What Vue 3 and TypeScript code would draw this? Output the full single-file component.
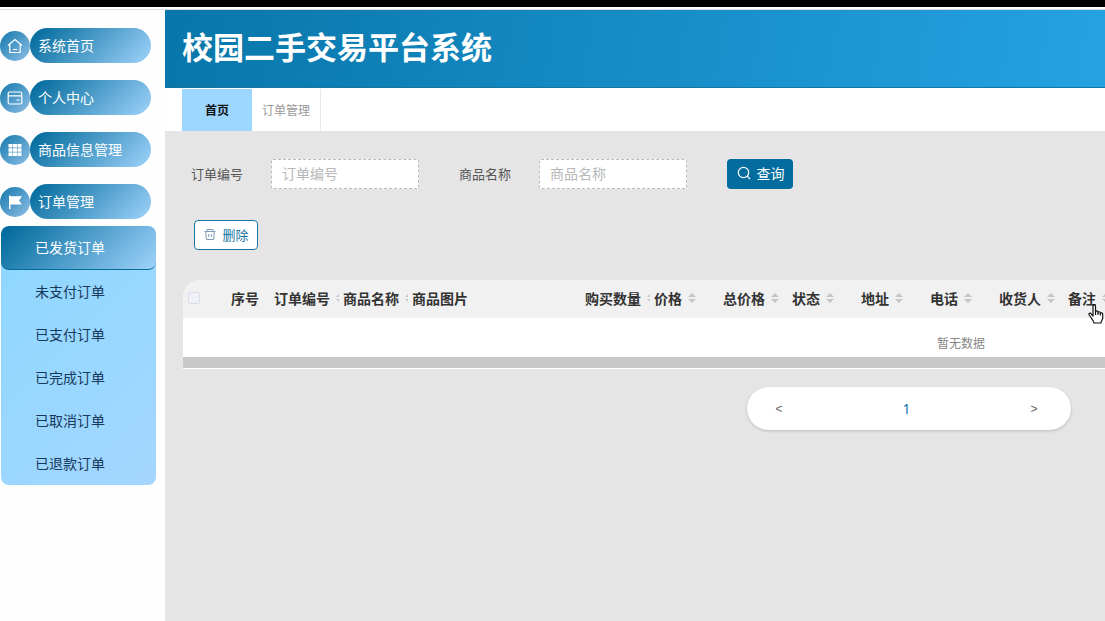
<script setup lang="ts">
import { ref } from 'vue'

interface MenuItem {
  icon: string
  label: string
}

interface Column {
  label: string
  sortable: boolean
}

const menu: MenuItem[] = [
  { icon: 'home', label: '系统首页' },
  { icon: 'card', label: '个人中心' },
  { icon: 'grid', label: '商品信息管理' },
  { icon: 'flag', label: '订单管理' },
]

const subMenu: string[] = ['已发货订单', '未支付订单', '已支付订单', '已完成订单', '已取消订单', '已退款订单']
const activeSub = ref('已发货订单')

const columns: Column[] = [
  { label: '订单编号', sortable: true },
  { label: '商品名称', sortable: true },
  { label: '商品图片', sortable: false },
  { label: '购买数量', sortable: true },
  { label: '价格', sortable: true },
  { label: '总价格', sortable: true },
  { label: '状态', sortable: true },
  { label: '地址', sortable: true },
  { label: '电话', sortable: true },
  { label: '收货人', sortable: true },
  { label: '备注', sortable: true },
]

const orderNo = ref('')
const productName = ref('')
</script>

<template>
  <div class="app">
    <div class="topbar"></div>
    <div class="shell">
      <aside class="sidebar">
        <nav>
          <a v-for="item in menu" :key="item.label" href="#" class="menu-item">
            <span class="menu-icon">
              <svg v-if="item.icon === 'home'" viewBox="0 0 16 16" fill="none" stroke="#fff" stroke-width="1.2">
                <path d="M1 7.500 8 1.500l7 6M2.800 6.200v8.300h10.400V6.200M6 11.500h4" />
              </svg>
              <svg v-else-if="item.icon === 'card'" viewBox="0 0 16 16" fill="none" stroke="#fff" stroke-width="1.2">
                <rect x="1.200" y="2" width="13.600" height="12" rx="1.500" />
                <path d="M1.200 5.800h13.600M9.500 10h3" />
              </svg>
              <svg v-else-if="item.icon === 'grid'" viewBox="0 0 16 16" fill="#fff">
                <path d="M1.500 2h4v3.600h-4zM6 2h4v3.600H6zM10.500 2h4v3.600h-4zM1.500 6.200h4v3.600h-4zM6 6.200h4v3.600H6zM10.500 6.200h4v3.600h-4zM1.500 10.400h4V14h-4zM6 10.400h4V14H6zM10.500 10.400h4V14h-4z" />
              </svg>
              <svg v-else viewBox="0 0 16 16" fill="#fff">
                <path d="M2 1.500h1.500v13.500H2zM3.500 2.300h11.500l-3 4.100 3 4.100H3.500z" />
              </svg>
            </span>
            <span class="menu-label">{{ item.label }}</span>
          </a>
          <div class="submenu">
            <a
              v-for="name in subMenu"
              :key="name"
              href="#"
              class="sub-item"
              :class="{ active: name === activeSub }"
              @click.prevent="activeSub = name"
            >{{ name }}</a>
          </div>
        </nav>
      </aside>

      <main class="main">
        <header class="banner"><h1>校园二手交易平台系统</h1></header>
        <div class="tabs">
          <button type="button" class="tab current">首页</button>
          <button type="button" class="tab">订单管理</button>
        </div>

        <form class="filters" @submit.prevent>
          <label for="order-no">订单编号</label>
          <input id="order-no" v-model="orderNo" type="text" placeholder="订单编号" />
          <label for="product-name">商品名称</label>
          <input id="product-name" v-model="productName" type="text" placeholder="商品名称" />
          <button type="submit" class="search">
            <svg viewBox="0 0 14 14" fill="none" stroke="#fff" stroke-width="1.2">
              <circle cx="6.500" cy="6.500" r="5.200" />
              <path d="m10.200 10.200 2.800 2.800" />
            </svg>
            查询
          </button>
        </form>

        <div class="actions">
          <button type="button" class="delete">
            <svg viewBox="0 0 12 12" fill="none" stroke="#7f9cb8" stroke-width="1">
              <path d="M.5 3.500h11M3 3.500V1.500h6v2M1.800 3.500l.5 8h7.400l.5-8M4.700 6v3M7.300 6v3" />
            </svg>
            删除
          </button>
        </div>

        <div class="table-wrap">
          <table>
            <colgroup>
              <col class="c-check" />
              <col class="c-index" />
              <col v-for="c in columns" :key="c.label" :class="c.sortable ? 'c-data' : 'c-image'" />
              <col />
            </colgroup>
            <thead>
              <tr>
                <th class="check"><input type="checkbox" aria-label="全选" /></th>
                <th class="index">序号</th>
                <th v-for="c in columns" :key="c.label">
                  <div class="cell">
                    {{ c.label }}
                    <span v-if="c.sortable" class="sort"><i class="up"></i><i class="down"></i></span>
                  </div>
                </th>
                <th></th>
              </tr>
            </thead>
            <tbody>
              <tr>
                <td :colspan="columns.length + 3">暂无数据</td>
              </tr>
            </tbody>
          </table>
          <div class="track"></div>
        </div>

        <div class="pager-row">
          <div class="pager">
            <button type="button">&lt;</button>
            <button type="button" class="page">1</button>
            <button type="button">&gt;</button>
          </div>
        </div>
      </main>
    </div>

    <svg class="pointer" viewBox="0 0 16 20" fill="#fff" stroke="#111" stroke-width="1.2" stroke-linejoin="round">
      <path d="M5 12V2.200C5 .5 7.500.5 7.500 2.200V8c0-1.500 2.500-1.500 2.500 0v.8c0-1.400 2.400-1.400 2.400 0v1c0-1.300 2.300-1.200 2.300.2V14c0 2-1.700 3-1.700 5H6c0-2-2-3.500-3-5.500L1.200 11c-1-1.500 1-2.400 2-1.200z" />
      <path d="M7.500 8v3M10 8.800V11M12.400 9.800V11.500" fill="none" />
    </svg>
  </div>
</template>

<style>
body {
  margin: 0;
  background: #fff;
  overflow: hidden;
}
</style>

<style scoped>
.app {
  display: flex;
  flex-direction: column;
  min-height: 100vh;
  position: relative;
  overflow: hidden;
  font-family: "Liberation Sans", "Noto Sans CJK SC", sans-serif;
  font-size: 14px;
  color: #333;
}
.app *,
.app {
  box-sizing: border-box;
}
button,
input {
  font-family: inherit;
  margin: 0;
}
a {
  text-decoration: none;
}
svg {
  flex: none;
}
.topbar {
  height: 10px;
  background: #fff;
  border-top: 7px solid #000;
  border-bottom: 1px solid #dcdcdc;
}
.shell {
  flex: 1;
  display: flex;
}
.sidebar {
  width: 165px;
  flex: none;
  padding-top: 18px;
  background: #fefefe;
}
.menu-item {
  display: flex;
  align-items: center;
  height: 35px;
  margin: 0 14px 17px 0;
}
.menu-icon {
  display: flex;
  align-items: center;
  justify-content: center;
  width: 30px;
  height: 30px;
  border-radius: 50%;
  background: linear-gradient(135deg, #1377aa, #8fc0e8);
}
.menu-icon svg {
  width: 16px;
  height: 16px;
}
.menu-label {
  flex: 1;
  height: 35px;
  padding-left: 8px;
  border-radius: 18px;
  background: linear-gradient(135deg, #046c9d 5%, #9fd3fb);
  color: #fff;
  line-height: 36px;
}
.submenu {
  margin: -10px 9px 0 1px;
  border-radius: 8px;
  overflow: hidden;
  background: linear-gradient(135deg, #8dd8ff, #a4d6ff);
}
.sub-item {
  display: block;
  height: 43px;
  padding-left: 34px;
  line-height: 44px;
  color: #17395c;
}
.sub-item.active {
  height: 44px;
  border-bottom: 1px solid #046c9d;
  border-radius: 8px;
  background: linear-gradient(135deg, #046c9d 5%, #9fd3fb);
  color: #fff;
}
.main {
  flex: 1;
  min-width: 0;
  background: #e5e5e5;
}
.banner {
  height: 78px;
  padding-left: 17px;
  background: linear-gradient(100deg, #0876a9, #25a2e2);
  border-bottom: 1px solid #1676a2;
}
h1 {
  margin: 0;
  font-size: 31px;
  line-height: 78px;
  color: #fff;
}
.tabs {
  display: flex;
  height: 43px;
  padding: 1px 0 0 17px;
  background: #fff;
}
.tab {
  padding: 0 10px 2px;
  border: 0;
  border-right: 1px solid #e8e8e8;
  background: transparent;
  font-size: 12px;
  color: #999;
}
.tab.current {
  width: 70px;
  border-right: 0;
  background: #9dd7ff;
  font-weight: 700;
  color: #111;
}
.filters {
  display: flex;
  align-items: center;
  padding: 28px 0 0 26px;
}
.filters label {
  width: 80px;
  padding-bottom: 2px;
  font-size: 13px;
  color: #555;
}
.filters input {
  width: 148px;
  height: 30px;
  margin-right: 40px;
  padding: 0 10px;
  border: 1px dashed #bbb;
  border-radius: 2px;
  background: #fff;
  font-size: 14px;
}
.filters input::placeholder {
  color: #b8b8b8;
}
.search,
.delete {
  display: flex;
  align-items: center;
  justify-content: center;
  gap: 6px;
  height: 30px;
  padding: 0 0 2px 1px;
  border-radius: 4px;
  font-size: 14px;
}
.search {
  width: 66px;
  border: 0;
  background: #036c9f;
  color: #fff;
}
.search svg {
  width: 14px;
  height: 14px;
}
.actions {
  padding: 31px 0 0 29px;
}
.delete {
  width: 64px;
  border: 1px solid #1a76a3;
  background: #fff;
  font-size: 13px;
  color: #1a76a3;
}
.delete svg {
  width: 12px;
  height: 12px;
}
.table-wrap {
  margin: 30px 0 0 18px;
  border-bottom: 1px solid #fff;
  border-radius: 16px 0 0 0;
  overflow: hidden;
}
table {
  width: 1556px;
  table-layout: fixed;
  border-collapse: collapse;
}
.c-check {
  width: 39px;
}
.c-index {
  width: 48px;
}
.c-data {
  width: 69px;
}
.c-image {
  width: 173px;
}
th {
  height: 38px;
  padding: 0 0 2px 4px;
  background: #f1f1f1;
  font-weight: 600;
  color: #333;
  text-align: left;
}
th.check {
  padding-left: 5px;
}
th.index {
  padding-left: 9px;
}
th input {
  display: block;
  appearance: none;
  width: 12px;
  height: 12px;
  border: 1px solid #dcdde8;
  border-radius: 2px;
  background: #f0f1f8;
}
.cell {
  display: flex;
  align-items: center;
  gap: 6px;
  overflow: hidden;
  white-space: nowrap;
}
.sort {
  display: flex;
  flex: none;
  flex-direction: column;
  gap: 2px;
}
.sort i {
  border: 4px solid transparent;
}
.sort .up {
  border-top: 0;
  border-bottom-color: #c4c6ca;
}
.sort .down {
  border-bottom: 0;
  border-top-color: #c4c6ca;
}
td {
  height: 39px;
  padding: 10px 0 0;
  background: #fff;
  font-size: 12px;
  color: #888;
  text-align: center;
}
.track {
  height: 11px;
  background: #c8c8c8;
}
.pager-row {
  display: flex;
  justify-content: flex-end;
  padding: 18px 34px 0 0;
}
.pager {
  display: flex;
  align-items: center;
  justify-content: space-between;
  width: 324px;
  height: 43px;
  padding: 0 22px 0 17px;
  border-radius: 22px;
  background: #fff;
  box-shadow: 0 1px 3px #00000030;
}
.pager button {
  width: 30px;
  padding: 0;
  border: 0;
  background: transparent;
  font-size: 12px;
  color: #666;
}
.pager .page {
  font-family: "Noto Sans", sans-serif;
  font-size: 14px;
  color: #0a78a8;
}
.pointer {
  position: absolute;
  right: 1px;
  top: 304px;
  width: 16px;
  height: 20px;
}
</style>
